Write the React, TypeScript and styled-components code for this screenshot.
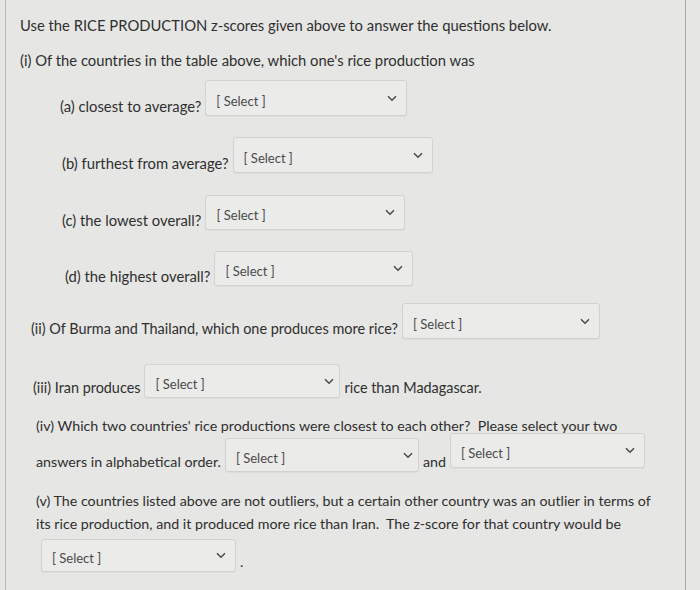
import styled, { createGlobalStyle } from 'styled-components';

const GlobalStyle = createGlobalStyle`
  body {
    margin: 0;
    background: #e6e6e4;
    font-family: Lato, "Open Sans", sans-serif;
    color: #2f2f2f;
  }
`;

export default function App() {
  return (
    <>
      <GlobalStyle />
      <Page>
        <Text $indent={14} $top={15}>
          Use the RICE PRODUCTION z-scores given above to answer the questions below.
        </Text>
        <Text $indent={14} $top={15}>
          (i) Of the countries in the table above, which one's rice production was
        </Text>

        <Row $indent={54} $top={10}>
          <Label>(a) closest to average?</Label>
          <Select width={202} />
        </Row>
        <Row $indent={56} $top={21}>
          <Label>(b) furthest from average?</Label>
          <Select width={200} />
        </Row>
        <Row $indent={56} $top={21}>
          <Label>(c) the lowest overall?</Label>
          <Select width={200} height={35} />
        </Row>
        <Row $indent={59} $top={20}>
          <Label>(d) the highest overall?</Label>
          <Select width={199} height={35} />
        </Row>

        <Row $indent={25} $top={17}>
          <Label $size={14.45}>(ii) Of Burma and Thailand, which one produces more rice?</Label>
          <Select width={198} />
        </Row>

        <Row $indent={27} $top={23}>
          <Label $size={14.4}>(iii) Iran produces</Label>
          <Select width={196} height={34} tight />
          <Label $size={14.4}>rice than Madagascar.</Label>
        </Row>

        <Text $indent={30} $top={18} $size={14.25}>
          (iv) Which two countries' rice productions were closest to each other?&nbsp; Please select your two
        </Text>
        <Row $indent={30} $top={0}>
          <Label $size={14.25}>answers in alphabetical order.</Label>
          <Select width={194} height={34} tight />
          <Label $size={14.25}>and</Label>
          <Select width={195} height={35} lift={4} />
        </Row>

        <Para $indent={30} $top={17}>
          (v) The countries listed above are not outliers, but a certain other country was an outlier in terms of
          <br />
          its rice production, and it produced more rice than Iran.&nbsp; The z-score for that country would be
        </Para>
        <Row $indent={35} $top={1}>
          <Select width={195} height={33} />
          <Label $size={14.25}>.</Label>
        </Row>
      </Page>
    </>
  );
}

function Select({
  width,
  height = 36,
  lift = 0,
  tight = false,
}: {
  width: number;
  height?: number;
  lift?: number;
  tight?: boolean;
}) {
  return (
    <SelectBox $w={width} $h={height} $lift={lift} $tight={tight}>
      <SelectText>[ Select ]</SelectText>
      <svg width="10" height="7" viewBox="0 0 10 7">
        <path d="M1 1.2 L5 5.2 L9 1.2" fill="none" stroke="#4a4a4a" strokeWidth="1.5" />
      </svg>
    </SelectBox>
  );
}

const Page = styled.div`
  margin-left: 5px;
  width: 681px;
  min-height: 590px;
  box-sizing: border-box;
  border-left: 1px solid #b9b9b7;
  border-right: 1px solid #a9a9a7;
  overflow: hidden;
`;

const Text = styled.div<{ $indent: number; $top: number; $size?: number }>`
  margin: ${p => p.$top}px 0 0 ${p => p.$indent}px;
  font-size: ${p => p.$size ?? 14.8}px;
  line-height: 20px;
  white-space: nowrap;
`;

const Para = styled.div<{ $indent: number; $top: number }>`
  margin: ${p => p.$top}px 0 0 ${p => p.$indent}px;
  font-size: 14.25px;
  line-height: 23px;
  white-space: nowrap;
`;

const Row = styled.div<{ $indent: number; $top: number }>`
  display: flex;
  align-items: flex-end;
  gap: 4px;
  height: 36px;
  margin: ${p => p.$top}px 0 0 ${p => p.$indent}px;
`;

const Label = styled.span<{ $size?: number }>`
  font-size: ${p => p.$size ?? 14.8}px;
  line-height: 20px;
  white-space: nowrap;
`;

const SelectBox = styled.div<{ $w: number; $h: number; $lift: number; $tight: boolean }>`
  box-sizing: border-box;
  width: ${p => p.$w}px;
  height: ${p => p.$h}px;
  margin-bottom: ${p => p.$lift}px;
  display: flex;
  align-items: center;
  justify-content: space-between;
  padding: 0 ${p => (p.$tight ? 5 : 9)}px 0 10px;
  background: #ebebea;
  border: 1px solid #d2d2d0;
  border-radius: 3px;
  box-shadow: 0 1px 0 rgba(0, 0, 0, 0.04);
`;

const SelectText = styled.span`
  font-size: 13px;
  color: #4a4a4a;
  padding-top: 5px;
`;
